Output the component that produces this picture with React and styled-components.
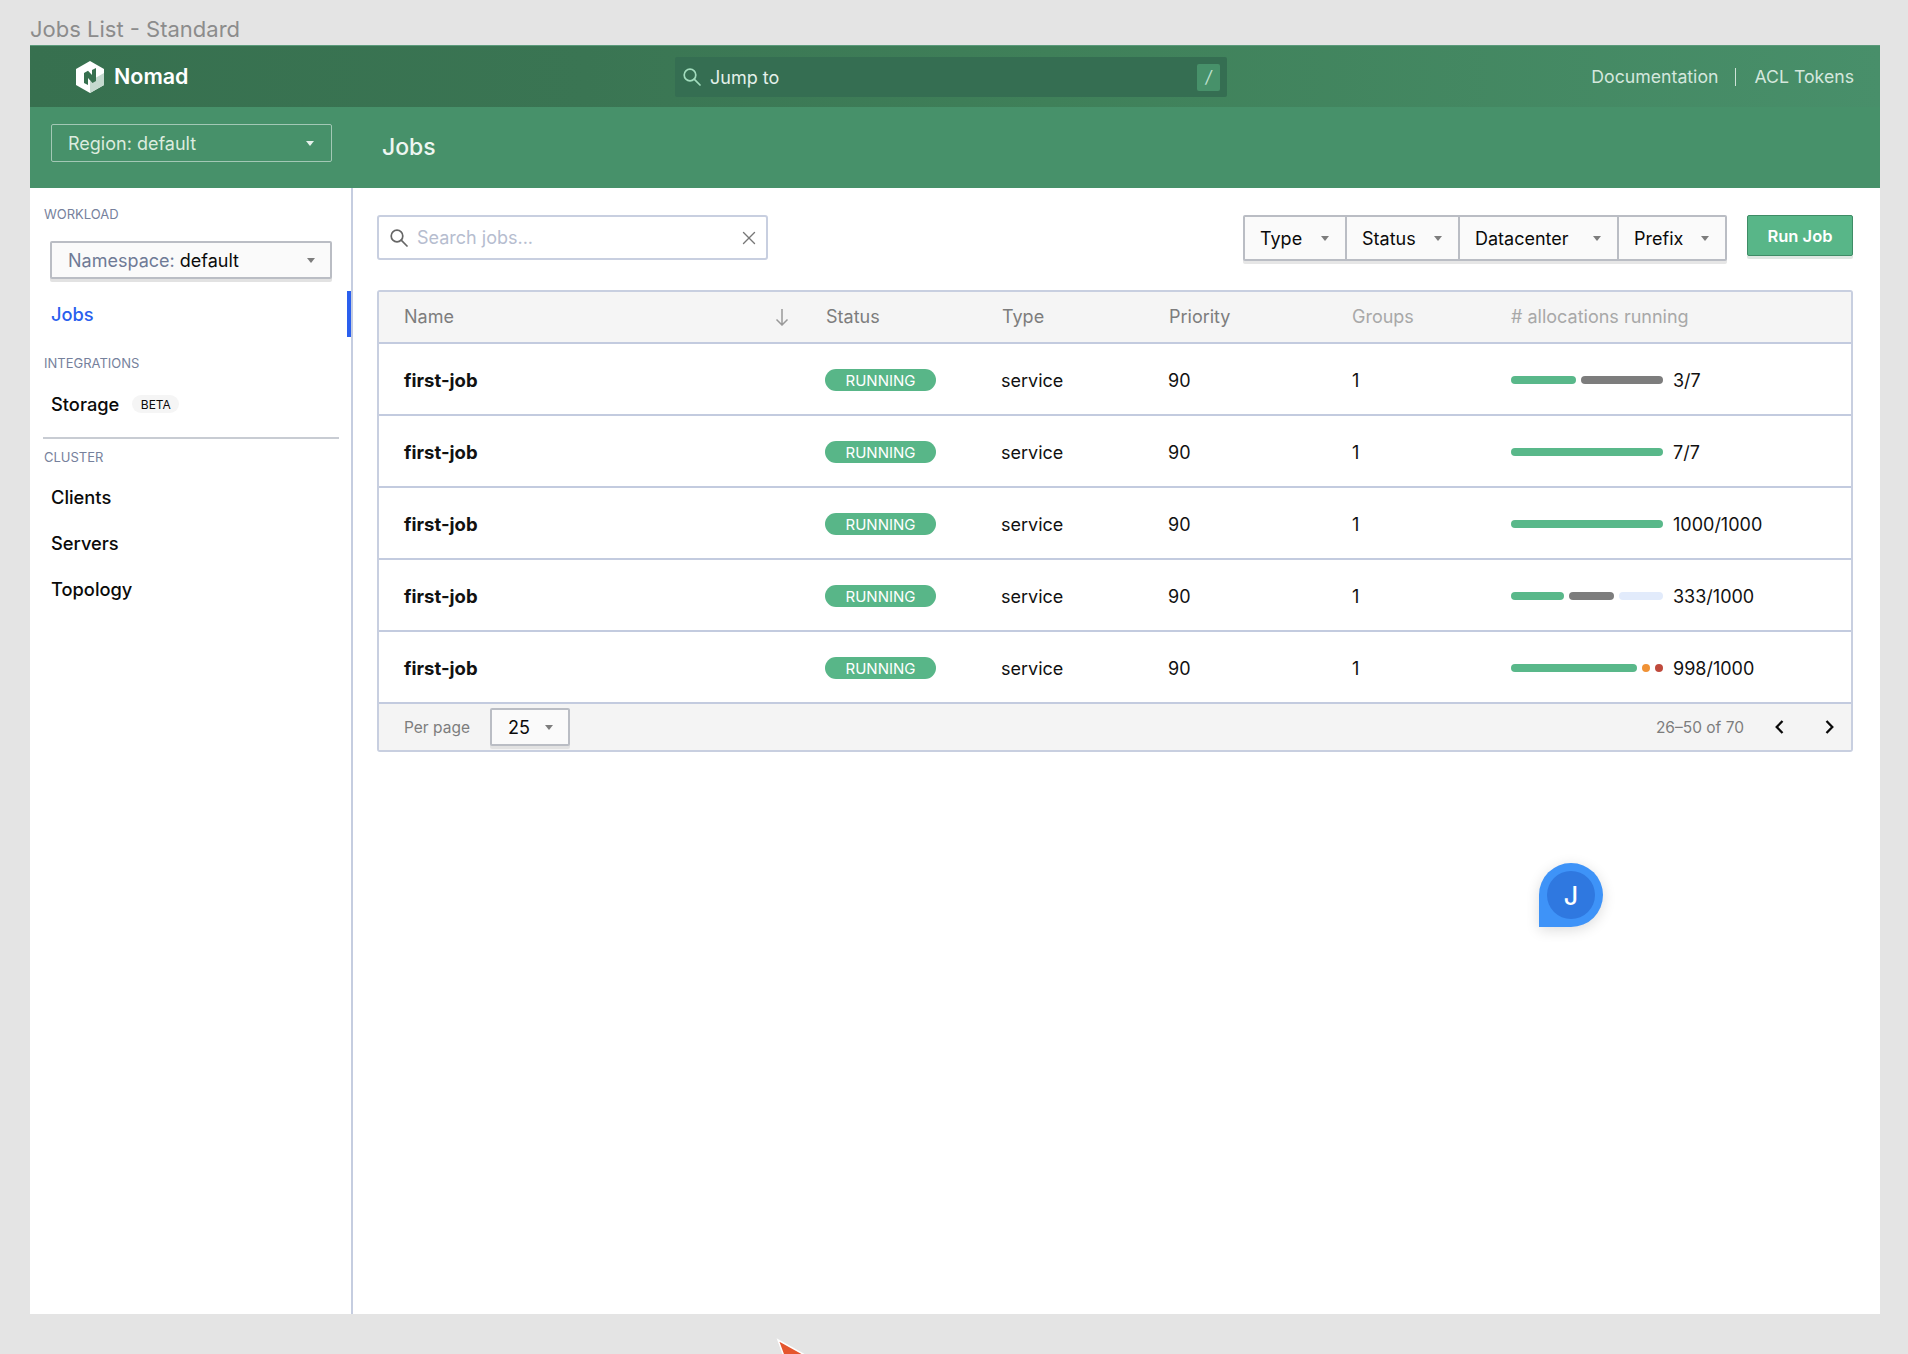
import React from "react";
import styled, { createGlobalStyle } from "styled-components";
import { X } from "lucide-react";

const Global = createGlobalStyle`
  html, body { margin: 0; padding: 0; background: #e4e4e4; }
  * { box-sizing: border-box; }
  body { font-family: Inter, Roboto, "Noto Sans", "Liberation Sans", sans-serif; color: #0a0a0a; }
`;

const Page = styled.div`
  position: relative;
  width: 1908px;
  height: 1354px;
  overflow: hidden;
  background: #e4e4e4;
  padding: 0 28px 0 30px;
`;
const PageTitle = styled.div`
  height: 45px;
  padding-top: 15px;
  font-size: 22px;
  line-height: 28px;
  color: #8c8c8c;
`;
const Frame = styled.div`
  height: 1269px;
  background: #fff;
  display: flex;
  flex-direction: column;
`;
const TopBar = styled.header`
  height: 62px;
  flex: none;
  display: flex;
  align-items: center;
  background: linear-gradient(90deg, #37704f 0%, #3a7553 30%, #3f8059 55%, #488f6a 100%);
  border-top: 1px solid #5b9a7b;
  padding: 0 26px 0 46px;
`;
const Brand = styled.div`
  width: 599px;
  display: flex;
  align-items: center;
  gap: 10px;
  color: #fff;
  font-size: 21.5px;
  font-weight: 600;
`;
const BrandName = styled.span`
  margin-bottom: 2px;
`;
const JumpBox = styled.div`
  width: 552px;
  height: 40px;
  background: #356e52;
  border-radius: 2px;
  display: flex;
  align-items: center;
  padding: 0 7px 0 8px;
  color: #e3f1ea;
  font-size: 18px;
  margin-top: 1px;
`;
const JumpIcon = styled.svg`
  color: #a2dcbd;
  margin-right: 9px;
`;
const KeyHint = styled.span`
  margin-left: auto;
  width: 23px;
  height: 27px;
  background: #47916a;
  border-radius: 2px;
  color: #bfe0cf;
  font-size: 17px;
  font-style: italic;
  display: flex;
  align-items: center;
  justify-content: center;
`;
const TopLinks = styled.nav`
  margin-left: auto;
  display: flex;
  align-items: center;
  color: #d4e7dd;
  font-size: 17.7px;
`;
const LinkDivider = styled.span`
  width: 1px;
  height: 18px;
  background: #cfe3d8;
  margin: 0 18px 0 17px;
`;
const SubBar = styled.div`
  height: 81px;
  flex: none;
  display: flex;
  align-items: flex-start;
  background: #47916a;
  padding: 17px 0 0 21px;
`;
const SelectBox = styled.div`
  display: flex;
  align-items: center;
  height: 38px;
  width: ${(p) => p.$w}px;
  font-size: 18px;
  background: ${(p) => (p.$ghost ? "transparent" : "#fafafa")};
  border: ${(p) => (p.$ghost ? "1.5px solid #a3c8b5" : "2px solid #babdc4")};
  border-radius: 2px;
  box-shadow: ${(p) => (p.$ghost ? "none" : "0 3px 0 #e2e2e2")};
  color: ${(p) => (p.$ghost ? "#dcecdf" : "#0a0a0a")};
  padding-left: ${(p) => p.$pad}px;
  padding-right: ${(p) => p.$padR}px;
`;
const Caret = styled.i`
  margin-left: auto;
  flex: none;
  width: 0;
  height: 0;
  border-left: 4.5px solid transparent;
  border-right: 4.5px solid transparent;
  border-top: 5px solid ${(p) => p.$color || "#7d7d7d"};
`;
const PageHeading = styled.h1`
  margin: 8px 0 0 50px;
  font-size: 23px;
  line-height: 30px;
  font-weight: 500;
  color: #eef6f1;
`;
const Body = styled.div`
  flex: 1;
  display: flex;
  min-height: 0;
`;
const Sidebar = styled.aside`
  width: 323px;
  flex: none;
  border-right: 2px solid #c5cde0;
  padding-top: 18px;
`;
const SectionLabel = styled.div`
  height: 16px;
  margin: ${(p) => p.$top || 0}px 0 0 14px;
  font-size: 13px;
  line-height: 16px;
  color: #76819c;
`;
const NamespaceWrap = styled.div`
  margin: 19px 0 0 20px;
`;
const Muted = styled.span`
  color: #6f7a96;
  white-space: pre;
`;
const NavItem = styled.div`
  height: 46px;
  display: flex;
  align-items: center;
  gap: 13px;
  margin-top: ${(p) => p.$top || 0}px;
  padding-left: 21px;
  font-size: 18.3px;
  font-weight: 500;
  color: ${(p) => (p.$active ? "#2a5fee" : "#0a0a0a")};
  border-right: 4px solid ${(p) => (p.$active ? "#2a5fee" : "transparent")};
`;
const BetaPill = styled.span`
  height: 18px;
  width: 47px;
  border-radius: 9px;
  background: #f5f5f5;
  font-size: 12px;
  font-weight: 400;
  display: flex;
  align-items: center;
  justify-content: center;
`;
const SideDivider = styled.hr`
  margin: 10px 12px 10px 13px;
  border: 0;
  height: 2px;
  background: #c8ccd3;
`;
const Main = styled.main`
  flex: 1;
  padding: 27px 27px 0 24px;
`;
const Toolbar = styled.div`
  display: flex;
  align-items: flex-start;
  height: 46px;
  margin-bottom: 29px;
`;
const SearchBox = styled.div`
  width: 391px;
  height: 45px;
  border: 2px solid #c8cfe0;
  border-radius: 3px;
  display: flex;
  align-items: center;
  padding: 0 6px 0 11px;
  font-size: 18px;
  color: #b6bdcf;
`;
const SearchIcon = styled.svg`
  color: #666;
  margin-right: 9px;
`;
const ClearIcon = styled(X)`
  color: #777;
  margin-left: auto;
`;
const FilterGroup = styled.div`
  margin-left: auto;
  height: 46px;
  display: flex;
  border: 2px solid #babdc4;
  border-radius: 2px;
  background: #fafafa;
  box-shadow: 0 3px 0 #e6e6e6;
`;
const FilterButton = styled.div`
  width: ${(p) => p.$w}px;
  display: flex;
  align-items: center;
  padding: 0 16px 0 15px;
  font-size: 18px;
  border-left: ${(p) => (p.$first ? "0" : "2px solid #babdc4")};
`;
const RunButton = styled.button`
  margin-left: 20px;
  width: 106px;
  height: 41px;
  background: #58b688;
  border: 1.5px solid #3f8c66;
  border-radius: 2px;
  color: #fff;
  font: 600 16.5px Inter, sans-serif;
  box-shadow: 0 3px 0 #dfe7e2;
  padding: 0;
`;
const Table = styled.section`
  border: 2px solid #c8cfe0;
  border-radius: 3px;
  height: 462px;
  display: flex;
  flex-direction: column;
  overflow: hidden;
`;
const Cols = "446px 176px 167px 184px 159px 1fr";
const HeadRow = styled.div`
  height: 50px;
  flex: none;
  display: grid;
  grid-template-columns: ${Cols};
  align-items: center;
  background: #f5f5f5;
  font-size: 18px;
  color: #7d7d7d;
`;
const HeadCell = styled.div`
  padding-left: ${(p) => p.$pl ?? 1}px;
  padding-right: ${(p) => p.$pr || 0}px;
  padding-bottom: 1px;
  color: ${(p) => (p.$faint ? "#a8a8a8" : "#7d7d7d")};
  display: flex;
  align-items: center;
  justify-content: space-between;
`;
const SortArrow = styled.svg`
  color: #999;
`;
const Row = styled.div`
  height: 72px;
  flex: none;
  display: grid;
  grid-template-columns: ${Cols};
  align-items: center;
  border-top: 2px solid #c3cbdf;
  padding-top: 2px;
  font-size: 18px;
  color: #111;
`;
const JobName = styled.div`
  padding-left: 25px;
  font-weight: 700;
  font-size: 18.5px;
`;
const StatusPill = styled.span`
  display: flex;
  width: 111px;
  height: 22px;
  border-radius: 11px;
  background: #58b688;
  color: #fff;
  font-size: 15px;
  align-items: center;
  justify-content: center;
`;
const AllocCell = styled.div`
  display: flex;
  align-items: center;
`;
const Bar = styled.div`
  width: 152px;
  height: 8px;
  display: flex;
  gap: 5px;
  margin-right: 10px;
`;
const Segment = styled.span`
  height: 8px;
  border-radius: 4px;
  flex: none;
  background: ${(p) => p.$color};
`;
const Footer = styled.div`
  flex: 1;
  border-top: 2px solid #c3cbdf;
  background: #f4f4f4;
  display: flex;
  align-items: center;
  padding: 0 17px 0 25px;
  font-size: 15.5px;
  color: #7d7d7d;
`;
const PerPageWrap = styled.div`
  margin-left: 20px;
  color: #0a0a0a;
`;
const RangeText = styled.span`
  margin-left: auto;
  margin-right: 31px;
`;
const Pager = styled.div`
  display: flex;
  gap: 41px;
  color: #0a0a0a;
`;
const Avatar = styled.div`
  position: absolute;
  left: 1539px;
  top: 863px;
  width: 64px;
  height: 64px;
  border-radius: 50% 50% 50% 0;
  background: #3e93f8;
  box-shadow: 0 3px 14px rgba(0, 0, 0, 0.14);
  display: flex;
  align-items: center;
  justify-content: center;
`;
const AvatarInner = styled.div`
  width: 48px;
  height: 48px;
  padding-top: 1px;
  border-radius: 50%;
  background: #2f78e0;
  color: #fff;
  font-size: 25px;
  font-weight: 500;
  display: flex;
  align-items: center;
  justify-content: center;
`;
const CursorMark = styled.svg`
  position: absolute;
  left: 775px;
  top: 1337px;
`;

const Logo = () => (
  <svg width="28" height="32" viewBox="0 0 28 32">
    <polygon points="14,0 28,8 28,24 14,32 0,24 0,8" fill="#fff" />
    <polygon points="28,12 28,24 14,32 14,20" fill="#c5d9cf" />
    <path d="M8 12 L12 9.7 L16 14 V9 L20 7 V20 L16.5 22 L12 17 V24 L8 22 Z" fill="#37704f" />
  </svg>
);
const lensProps = {
  width: 18,
  height: 18,
  viewBox: "0 0 18 18",
  fill: "none",
  stroke: "currentColor",
  strokeWidth: 1.7,
};
const Lens = () => (
  <>
    <circle cx="7" cy="7" r="5.8" />
    <path d="M11.2 11.2 L17 17" strokeLinecap="round" />
  </>
);
const Chevron = ({ d }) => (
  <svg width="9" height="14" viewBox="0 0 9 14" fill="none" stroke="currentColor" strokeWidth="2.3">
    <path d={d} />
  </svg>
);

const G = "#59b88a", D = "#7d7d7d", L = "#e2ebfb", O = "#f09236", R = "#bf4a3c";
const jobs = [
  { text: "3/7", segs: [[65, G], [82, D]] },
  { text: "7/7", segs: [[152, G]] },
  { text: "1000/1000", segs: [[152, G]] },
  { text: "333/1000", segs: [[53, G], [45, D], [44, L]] },
  { text: "998/1000", segs: [[126, G], [8, O], [8, R]] },
];
const filters = [
  { label: "Type", w: 100 },
  { label: "Status", w: 113 },
  { label: "Datacenter", w: 159 },
  { label: "Prefix", w: 108 },
];

export default function App() {
  return (
    <Page>
      <Global />
      <PageTitle>Jobs List - Standard</PageTitle>
      <Frame>
        <TopBar>
          <Brand>
            <Logo />
            <BrandName>Nomad</BrandName>
          </Brand>
          <JumpBox>
            <JumpIcon {...lensProps}><Lens /></JumpIcon>
            Jump to
            <KeyHint>/</KeyHint>
          </JumpBox>
          <TopLinks>
            Documentation
            <LinkDivider />
            ACL Tokens
          </TopLinks>
        </TopBar>
        <SubBar>
          <SelectBox $ghost $w={281} $pad={16} $padR={17}>
            Region: default
            <Caret $color="#e6f2ec" />
          </SelectBox>
          <PageHeading>Jobs</PageHeading>
        </SubBar>
        <Body>
          <Sidebar>
            <SectionLabel>WORKLOAD</SectionLabel>
            <NamespaceWrap>
              <SelectBox $w={282} $pad={16} $padR={15}>
                <Muted>Namespace: </Muted>default
                <Caret />
              </SelectBox>
            </NamespaceWrap>
            <NavItem $active $top={12}>Jobs</NavItem>
            <SectionLabel $top={18}>INTEGRATIONS</SectionLabel>
            <NavItem $top={10}>
              Storage
              <BetaPill>BETA</BetaPill>
            </NavItem>
            <SideDivider />
            <SectionLabel>CLUSTER</SectionLabel>
            <NavItem $top={9}>Clients</NavItem>
            <NavItem>Servers</NavItem>
            <NavItem>Topology</NavItem>
          </Sidebar>
          <Main>
            <Toolbar>
              <SearchBox>
                <SearchIcon {...lensProps}><Lens /></SearchIcon>
                Search jobs...
                <ClearIcon size={22} strokeWidth={1.5} />
              </SearchBox>
              <FilterGroup>
                {filters.map((f, i) => (
                  <FilterButton key={f.label} $w={f.w} $first={i === 0}>
                    {f.label}
                    <Caret />
                  </FilterButton>
                ))}
              </FilterGroup>
              <RunButton>Run Job</RunButton>
            </Toolbar>
            <Table>
              <HeadRow>
                <HeadCell $pl={25} $pr={36}>
                  Name
                  <SortArrow width="14" height="18" viewBox="0 0 14 18" fill="none" stroke="currentColor" strokeWidth="1.5">
                    <path d="M7 1 V17 M1.5 11.5 L7 17 L12.5 11.5" />
                  </SortArrow>
                </HeadCell>
                <HeadCell>Status</HeadCell>
                <HeadCell>Type</HeadCell>
                <HeadCell>Priority</HeadCell>
                <HeadCell $faint $pl={0}>Groups</HeadCell>
                <HeadCell $faint $pl={0}># allocations running</HeadCell>
              </HeadRow>
              {jobs.map((j, i) => (
                <Row key={i}>
                  <JobName>first-job</JobName>
                  <div><StatusPill>RUNNING</StatusPill></div>
                  <div>service</div>
                  <div>90</div>
                  <div>1</div>
                  <AllocCell>
                    <Bar>
                      {j.segs.map(([w, c], k) => (
                        <Segment key={k} $color={c} style={{ width: w }} />
                      ))}
                    </Bar>
                    {j.text}
                  </AllocCell>
                </Row>
              ))}
              <Footer>
                Per page
                <PerPageWrap>
                  <SelectBox $w={80} $pad={16} $padR={15}>
                    25
                    <Caret />
                  </SelectBox>
                </PerPageWrap>
                <RangeText>26–50 of 70</RangeText>
                <Pager>
                  <Chevron d="M7.5 1 L1.7 7 L7.5 13" />
                  <Chevron d="M1.5 1 L7.3 7 L1.5 13" />
                </Pager>
              </Footer>
            </Table>
          </Main>
        </Body>
      </Frame>
      <Avatar>
        <AvatarInner>J</AvatarInner>
      </Avatar>
      <CursorMark width="40" height="20" viewBox="0 0 40 20">
        <path d="M3 3 L28 17 L10 22 Z" fill="#e5562e" stroke="#fff" strokeWidth="1.5" />
      </CursorMark>
    </Page>
  );
}
